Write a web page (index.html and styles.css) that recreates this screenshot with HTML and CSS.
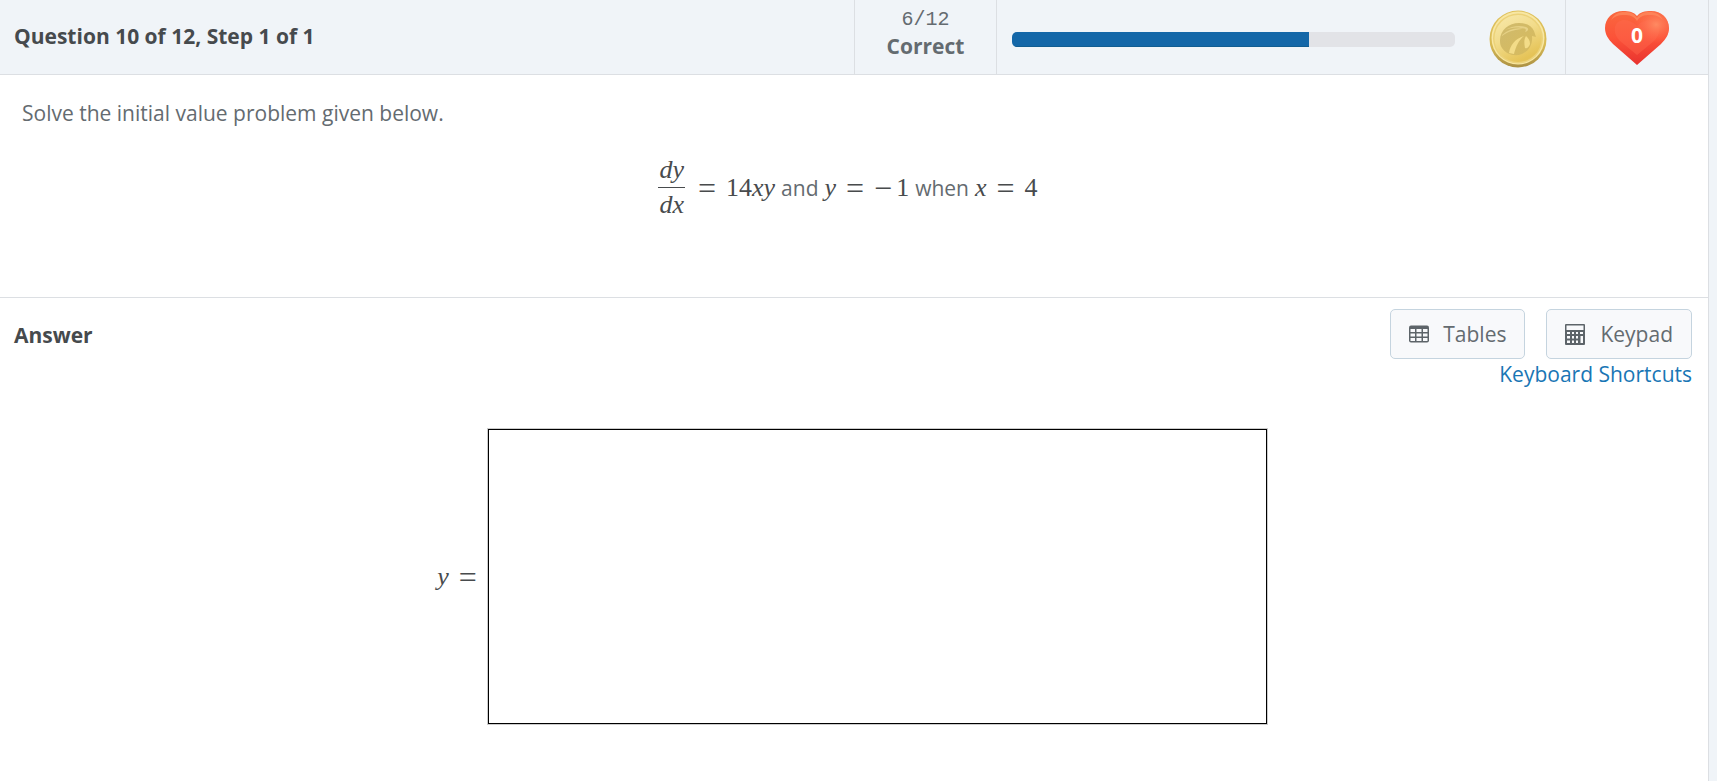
FILE: index.html
```html
<!DOCTYPE html>
<html lang="en">
<head>
<meta charset="utf-8">
<title>Question 10 of 12</title>
<link rel="stylesheet" href="styles.css">
</head>
<body>
<main class="page">
  <header class="topbar">
    <h1 class="title">Question 10 of 12, Step 1 of 1</h1>
    <div class="score"><span class="score-count">6/12</span><span class="score-label">Correct</span></div>
    <div class="status">
      <div class="track" role="progressbar" aria-label="Progress" aria-valuemin="0" aria-valuemax="12" aria-valuenow="8"><div class="fill"></div></div>
      <svg class="coin" viewBox="0 0 58 58" aria-hidden="true">
        <defs>
          <linearGradient id="rim" x1="0" y1="0" x2="0" y2="1"><stop offset="0" stop-color="#dfc15c"/><stop offset=".6" stop-color="#d9bb55"/><stop offset="1" stop-color="#ab9043"/></linearGradient>
          <linearGradient id="face" x1="0" y1="0" x2=".5" y2="1"><stop offset="0" stop-color="#f8e9ac"/><stop offset=".5" stop-color="#f2dc8b"/><stop offset="1" stop-color="#e5c357"/></linearGradient>
          <linearGradient id="bird" x1="0" y1="0" x2="1" y2="1"><stop offset="0" stop-color="#cfba6d"/><stop offset="1" stop-color="#d8bb5c"/></linearGradient>
        </defs>
        <circle cx="29" cy="29" r="28.5" fill="url(#rim)"/>
        <circle cx="29" cy="28" r="26.5" fill="#f8e7a3"/>
        <circle cx="29" cy="28.500" r="25" fill="#ecd279"/>
        <circle cx="29" cy="28.500" r="23.500" fill="url(#face)"/>
        <path d="M11 30C11 20 20 13 30 13c8 0 13 3 15 8l2 6-4-1c1 8-3 15-10 18-8 3-16 0-20-6-2-3-2-5-2-8z" fill="url(#bird)"/>
        <path d="M13 25c7-6 14-8 23-6-9 0-16 2-23 7zM16 20c7-4 14-5 21-3 3 1 3 4-1 5 2-3 0-4-4-4-6-1-11 0-16 2z" fill="#e6d186"/>
        <path d="M20 43c1-8 6-14 15-17-5 4-8 10-10 18zM36 38c-1-5-1-9 1-12 2 2 4 4 4 8-1 3-3 5-5 4z" fill="#f3dc88"/>
      </svg>
    </div>
    <div class="lives">
      <svg class="heart" viewBox="0 0 64 56" aria-hidden="true">
        <defs>
          <linearGradient id="hot" x1="0" y1="0" x2="0" y2="1"><stop offset="0" stop-color="#f9683f"/><stop offset=".5" stop-color="#fc5238"/><stop offset="1" stop-color="#e8322f"/></linearGradient>
          <radialGradient id="shine" cx=".8" cy=".25" r=".35"><stop offset="0" stop-color="#ff8a62"/><stop offset="1" stop-color="#ff684b" stop-opacity="0"/></radialGradient>
        </defs>
        <path d="M32 55L8 34C3 29 0 24 0 18 0 8 8 1 18 1c6 0 11 1 14 5 3-4 8-5 14-5 10 0 18 7 18 17 0 6-3 11-8 16z" fill="url(#hot)"/>
        <path d="M32 45L15 31c-4-4-6-9-5-14C12 9 23 7 32 16 41 7 52 9 54 17c1 5-1 10-5 14z" fill="#ff6b50" opacity=".4"/>
        <path d="M32 55L8 34C3 29 0 24 0 18 0 8 8 1 18 1c6 0 11 1 14 5 3-4 8-5 14-5 10 0 18 7 18 17 0 6-3 11-8 16z" fill="url(#shine)"/>
        <path d="M6 10C9 4 14 2 19 2c6 0 10 1 13 6 3-5 7-6 13-6 5 0 10 2 13 8-4-4-8-5-13-5-6 0-10 1-13 6-3-5-7-6-13-6-5 0-9 1-13 5z" fill="#ff9266" opacity=".6"/>
      </svg>
      <span class="lives-count">0</span>
    </div>
  </header>

  <section class="question">
    <p class="prompt">Solve the initial value problem given below.</p>
    <div class="equation">
      <span class="fraction"><i class="numerator">dy</i><i>dx</i></span>
      <span class="op">=</span>
      <span class="math">14<i>xy</i></span>
      <span class="word">and</span>
      <i class="math">y</i>
      <span class="op">=</span>
      <span class="op minus">−</span>
      <span class="math">1</span>
      <span class="word">when</span>
      <i class="math">x</i>
      <span class="op">=</span>
      <span class="math">4</span>
    </div>
  </section>

  <section class="answer">
    <div class="answer-head">
      <h2 class="title">Answer</h2>
      <div class="tools">
        <div class="buttons">
          <button class="tool" type="button">
            <svg class="icon" viewBox="0 0 20 20" aria-hidden="true"><path d="M2 1h16a2 2 0 0 1 2 2v13a2 2 0 0 1-2 2H2a2 2 0 0 1-2-2V3a2 2 0 0 1 2-2z" fill="#5d6469"/><path d="M1.500 4.500h4.500v3H1.500zM7.500 4.500h5v3h-5zM14 4.500h4.500v3H14zM1.500 9h4.500v3H1.500zM7.500 9h5v3h-5zM14 9h4.500v3H14zM1.500 13.500h4.500v3H1.500zM7.500 13.500h5v3h-5zM14 13.500h4.500v3H14z" fill="#f8f9fb"/></svg>
            Tables
          </button>
          <button class="tool keypad" type="button">
            <svg class="icon" viewBox="0 0 20 21" aria-hidden="true"><rect width="20" height="21" rx="1" fill="#5d6469"/><path d="M1.500 1.500h17v4.500h-17zM2 8h3v2H2zM7 8h2v2H7zM11 8h2v2h-2zM15 8h3v2h-3zM2 12h3v2.500H2zM7 12h2v2.500H7zM11 12h2v2.500h-2zM2 16.500h3v2.500H2zM7 16.500h2v2.500H7zM11 16.500h2v2.500h-2zM15.500 12H18v7h-2.500z" fill="#f8f9fb"/></svg>
            Keypad
          </button>
        </div>
        <a class="shortcuts" href="#">Keyboard Shortcuts</a>
      </div>
    </div>
    <div class="response">
      <label class="response-label" for="response"><i class="math">y</i><span class="op">=</span></label>
      <textarea class="field" id="response"></textarea>
    </div>
  </section>
</main>
</body>
</html>
```
FILE: styles.css
```css
* { box-sizing: border-box; }

body {
  margin: 0;
  padding-right: 8px;
  min-height: 100vh;
  display: flex;
  background: #f0f4f8;
  color: #646b70;
  font: 21px/28px "Open Sans", sans-serif;
}

.page {
  flex: 1;
  background: #fff;
  border-right: 1px solid #dcdfe3;
}

.topbar {
  display: grid;
  grid-template-columns: 1fr 142px 569px 143px;
  height: 75px;
  background: #f0f4f8;
  border-bottom: 1px solid #dcdfe3;
}

.title {
  margin: 0;
  padding-left: 14px;
  color: #464a4d;
  font-size: 21px;
  font-weight: 700;
  line-height: 28px;
}

.topbar .title { padding-top: 22px; }

.score, .status, .lives { border-left: 1px solid #dcdfe3; }

.score {
  display: flex;
  flex-direction: column;
  align-items: center;
  padding-top: 8px;
}

.score-count {
  font: 20px/24px "Liberation Mono", monospace;
}

.score-label {
  font-weight: 700;
}

.status {
  display: flex;
  align-items: center;
  gap: 34px;
  padding: 4px 18px 0 15px;
}

.track {
  flex: 1;
  height: 15px;
  border-radius: 5px;
  background: #e2e3e7;
  overflow: hidden;
}

.fill {
  width: 67%;
  height: 100%;
  background: #1467a8;
  border-bottom: 1px solid #115d91;
}

.coin { width: 58px; height: 58px; }

.lives {
  display: grid;
  place-items: center;
  padding-top: 2px;
}

.heart, .lives-count { grid-area: 1 / 1; }

.heart { width: 64px; height: 56px; }

.lives-count {
  padding-bottom: 6px;
  color: #fff;
  font-weight: 700;
}

.question {
  padding: 24px 22px 79px;
  border-bottom: 1px solid #dcdfe3;
}

.prompt { margin: 0 0 30px; }

.equation {
  display: flex;
  justify-content: center;
  align-items: center;
  height: 61px;
  padding-right: 12px;
}

.math, .fraction, .op {
  color: #484b4d;
  font-family: "Liberation Serif", serif;
  font-size: 26px;
}

.op {
  padding: 0 10px;
  font-size: 32px;
}

.minus { padding: 0 4px 0 0; }

.word { padding: 0 6px; }

.fraction {
  display: flex;
  flex-direction: column;
  align-items: center;
  margin-right: 3px;
  line-height: 34px;
}

.numerator {
  padding: 0 1px;
  border-bottom: 1px solid #484b4d;
}

.answer-head {
  display: flex;
  justify-content: space-between;
  padding: 11px 16px 0 0;
}

.answer-head .title { padding-top: 12px; }

.tools {
  display: flex;
  flex-direction: column;
  align-items: flex-end;
}

.buttons {
  display: flex;
  gap: 21px;
}

.tool {
  display: flex;
  align-items: center;
  gap: 14px;
  height: 50px;
  padding: 0 18px;
  background: #f8f9fb;
  border: 1px solid #c5d4df;
  border-radius: 5px;
  color: #646b70;
  font: inherit;
}

.keypad { gap: 15px; }

.icon { width: 20px; height: 21px; }

.shortcuts {
  color: #1976b5;
  line-height: 30px;
  text-decoration: none;
}

.response {
  display: flex;
  justify-content: center;
  align-items: center;
  padding: 40px 4px 0 0;
}

.response-label {
  display: flex;
  align-items: center;
  padding-right: 1px;
}

.field {
  width: 46%;
  max-width: 779px;
  height: 295px;
  border: 1px solid #000;
  outline: 1px solid #ccc;
  background: #fff;
  resize: none;
  font: inherit;
}
```
